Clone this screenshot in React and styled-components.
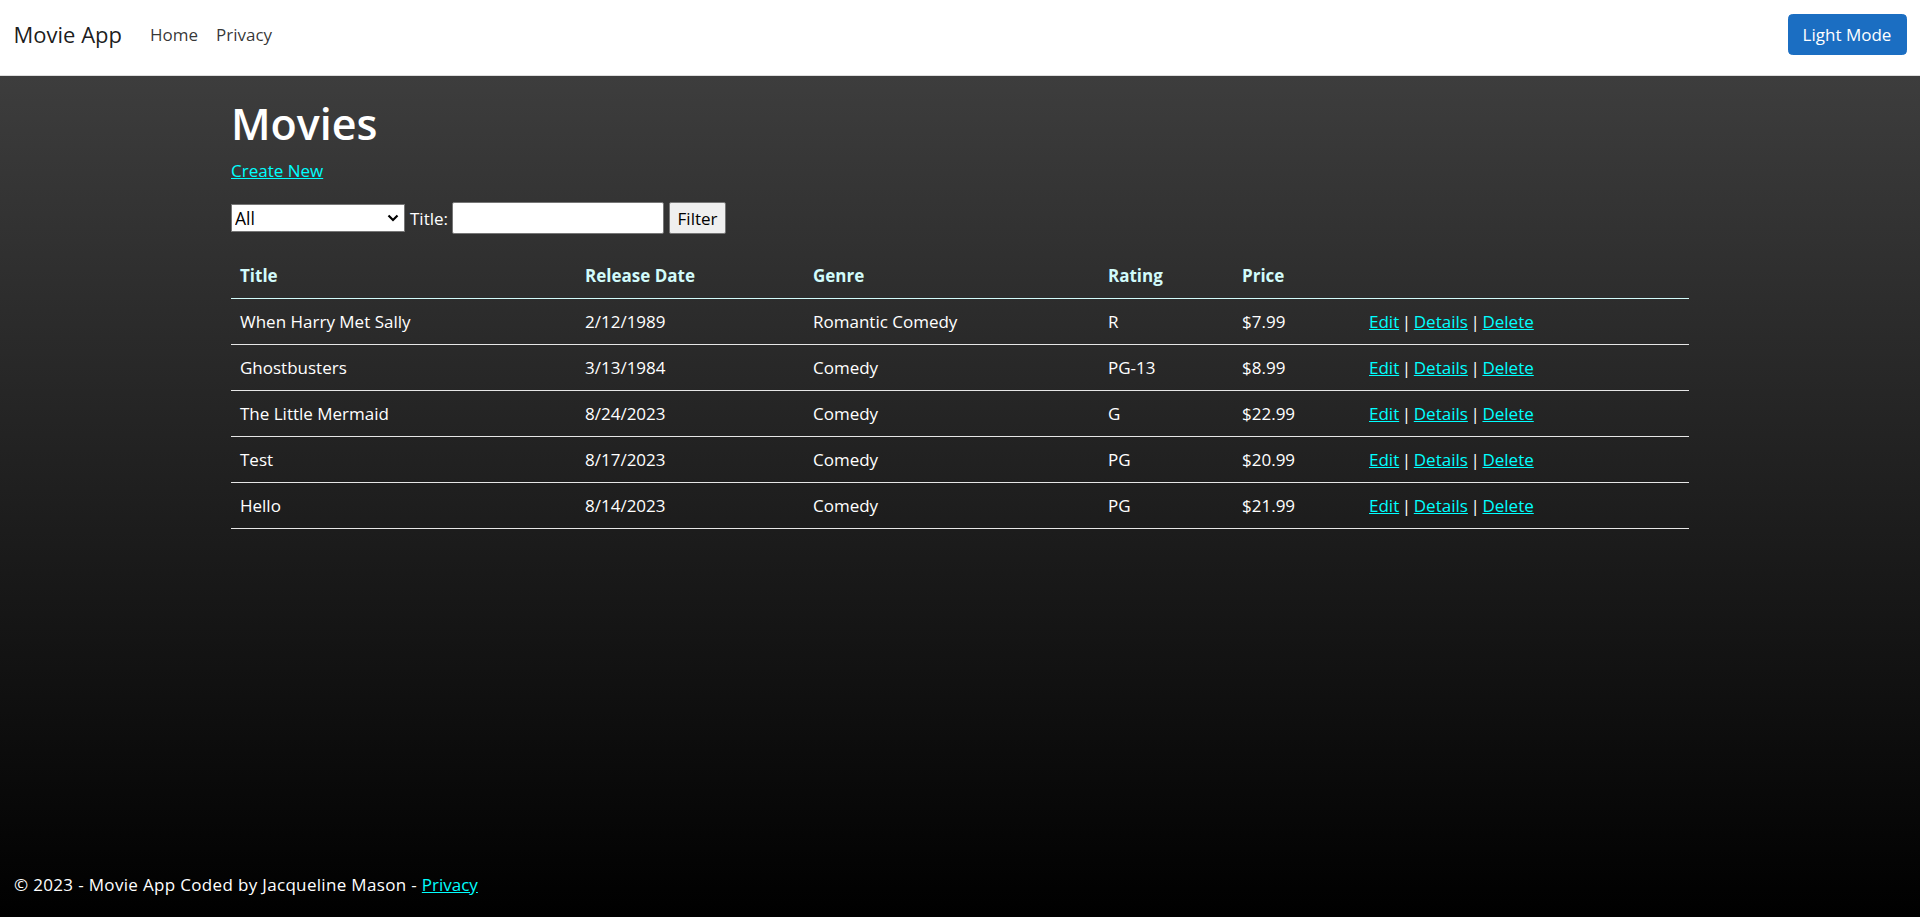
import React from "react";
import styled, { createGlobalStyle } from "styled-components";

const Global = createGlobalStyle`
  html, body { margin: 0; padding: 0; }
  * { box-sizing: border-box; }
  body {
    font-family: "Open Sans", "Noto Sans", "Liberation Sans", sans-serif;
    font-size: 17px;
    line-height: 27px;
    color: #fff;
    background: #000;
  }
`;

const Page = styled.div`
  min-height: 917px;
  height: 100vh;
  display: flex;
  flex-direction: column;
`;

const Header = styled.header`
  flex: none;
  height: 76px;
  background: #fff;
  border-bottom: 1px solid #dedede;
  display: flex;
  align-items: center;
  justify-content: space-between;
  padding: 0 13.5px 6px;
`;

const NavLeft = styled.nav`
  display: flex;
  align-items: center;
`;

const Brand = styled.a`
  font-size: 22px;
  color: rgba(0, 0, 0, 0.9);
  margin-right: 19px;
`;

const NavLink = styled.a`
  color: rgba(0, 0, 0, 0.8);
  padding: 0 9px;
`;

const ModeButton = styled.button`
  font: inherit;
  color: #fff;
  background: #1b6ec2;
  border: 1px solid #1b6ec2;
  border-radius: 4.5px;
  width: 119px;
  height: 41px;
  padding: 0;
`;

const Body = styled.div`
  flex: 1;
  display: flex;
  flex-direction: column;
  background: linear-gradient(180deg, #3d3d3d 0%, #000 100%);
`;

const Main = styled.main`
  flex: 1;
  width: 1458px;
  margin: 0 auto;
  padding-top: 18px;
`;

const Title = styled.h1`
  font-size: 43px;
  font-weight: 600;
  line-height: 54px;
  margin: 0 0 9px;
  padding-top: 3px;
  height: 54px;
`;

const Link = styled.a`
  color: #00ffff;
  text-decoration: underline;
`;

const Paragraph = styled.p`
  margin: 0 0 18px;
`;

const FilterForm = styled.form`
  display: flex;
  align-items: center;
  height: 32px;
  margin-bottom: 18px;
`;

const Select = styled.select`
  appearance: none;
  width: 174px;
  height: 28px;
  font: inherit;
  font-size: 17.5px;
  color: #000;
  border: 1px solid #767676;
  border-radius: 0;
  padding: 0 0 0 3px;
  background-color: #fff;
  background-image: url("data:image/svg+xml,%3Csvg xmlns='http://www.w3.org/2000/svg' width='12' height='8' viewBox='0 0 12 8'%3E%3Cpath d='M1.5 1.5 6 6l4.5-4.5' fill='none' stroke='%23000' stroke-width='2.2'/%3E%3C/svg%3E");
  background-repeat: no-repeat;
  background-position: right 5px center;
`;

const Label = styled.label`
  margin: 0 4px 0 5px;
`;

const TextInput = styled.input`
  width: 212px;
  height: 32px;
  background: #fff;
  border: 1px solid #767676;
  border-radius: 2px;
`;

const FilterButton = styled.button`
  font: inherit;
  width: 57px;
  height: 32px;
  margin-left: 5px;
  padding: 0;
  color: #000;
  background: #efefef;
  border: 1px solid #767676;
  border-radius: 2px;
`;

const Table = styled.table`
  width: 100%;
  table-layout: fixed;
  border-collapse: collapse;
`;

const Th = styled.th`
  width: ${(p) => p.$w}px;
  text-align: left;
  font-weight: 700;
  color: #d2fbfb;
  padding: 10px 9px 8px;
  height: 46px;
  border-bottom: 1px solid #d2fbfb;
`;

const Td = styled.td`
  padding: 9px;
  height: 46px;
  border-bottom: 1px solid #e6e6e6;
`;

const ActionCell = styled(Td)`
  word-spacing: -1.8px;
`;

const Footer = styled.footer`
  flex: none;
  height: 68px;
  line-height: 68px;
  padding: 2px 14px 0;
  white-space: nowrap;
  letter-spacing: 0.33px;

  a {
    letter-spacing: 0;
  }
`;

const movies = [
  ["When Harry Met Sally", "2/12/1989", "Romantic Comedy", "R", "$7.99"],
  ["Ghostbusters", "3/13/1984", "Comedy", "PG-13", "$8.99"],
  ["The Little Mermaid", "8/24/2023", "Comedy", "G", "$22.99"],
  ["Test", "8/17/2023", "Comedy", "PG", "$20.99"],
  ["Hello", "8/14/2023", "Comedy", "PG", "$21.99"],
];

const columns = [
  ["Title", 345],
  ["Release Date", 228],
  ["Genre", 295],
  ["Rating", 134],
  ["Price", 127],
  ["", 329],
];

export default function App() {
  return (
    <>
      <Global />
      <Page>
        <Header>
          <NavLeft>
            <Brand>Movie App</Brand>
            <NavLink>Home</NavLink>
            <NavLink>Privacy</NavLink>
          </NavLeft>
          <ModeButton>Light Mode</ModeButton>
        </Header>
        <Body>
          <Main>
            <Title>Movies</Title>
            <Paragraph>
              <Link>Create New</Link>
            </Paragraph>
            <FilterForm>
              <Select defaultValue="All">
                <option>All</option>
              </Select>
              <Label>Title:</Label>
              <TextInput />
              <FilterButton type="button">Filter</FilterButton>
            </FilterForm>
            <Table>
              <thead>
                <tr>
                  {columns.map(([name, w], i) => (
                    <Th key={i} $w={w}>{name}</Th>
                  ))}
                </tr>
              </thead>
              <tbody>
                {movies.map((m) => (
                  <tr key={m[0]}>
                    {m.map((v, i) => (
                      <Td key={i}>{v}</Td>
                    ))}
                    <ActionCell>
                      <Link>Edit</Link> | <Link>Details</Link> | <Link>Delete</Link>
                    </ActionCell>
                  </tr>
                ))}
              </tbody>
            </Table>
          </Main>
          <Footer>
            © 2023 - Movie App Coded by Jacqueline Mason - <Link>Privacy</Link>
          </Footer>
        </Body>
      </Page>
    </>
  );
}
